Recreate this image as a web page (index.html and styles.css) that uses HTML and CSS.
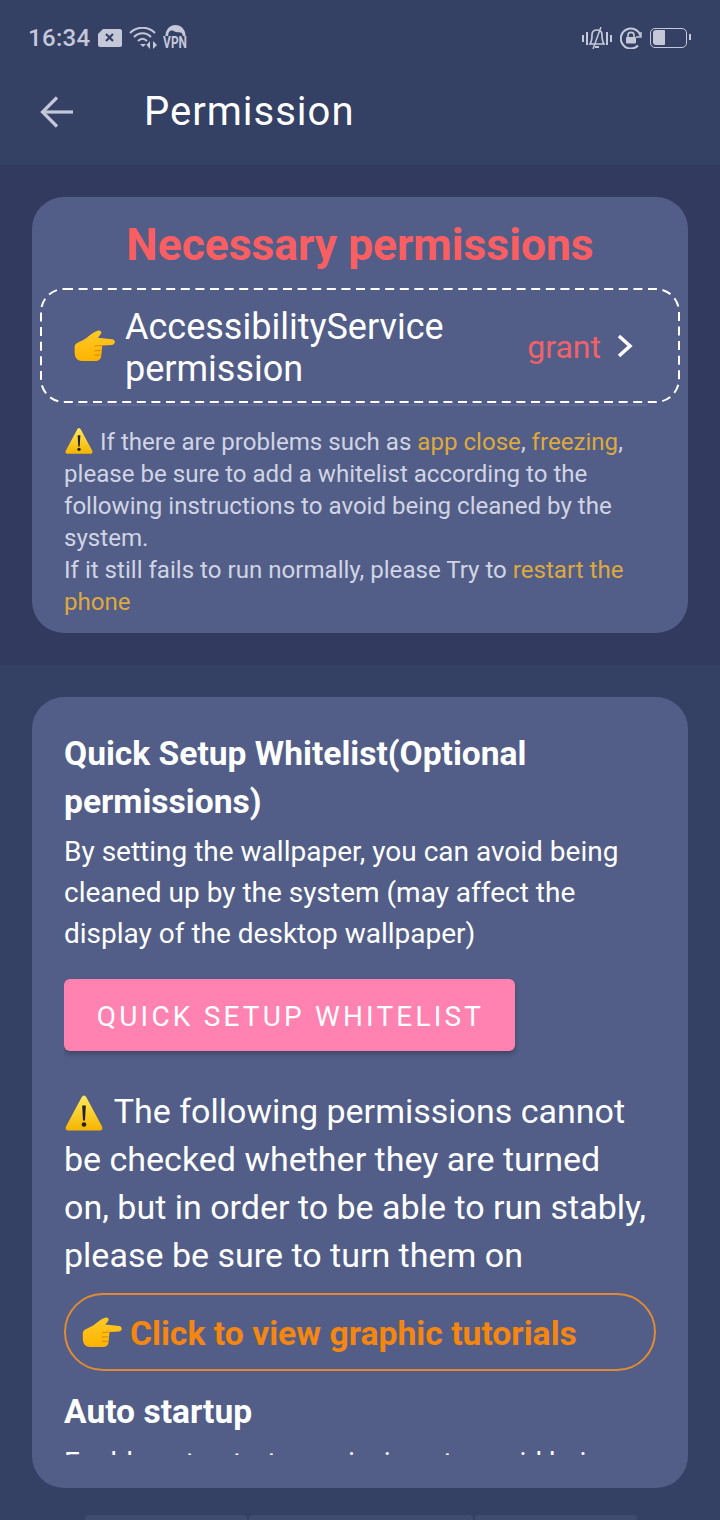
FILE: index.html
```html
<!DOCTYPE html>
<html lang="en">
<head>
    <meta charset="UTF-8">
    <meta name="viewport" content="width=device-width, initial-scale=1.0">
    <title>Permission</title>
    <link rel="stylesheet" href="styles.css">
</head>
<body>

<svg class="sprite" width="0" height="0">
    <defs>
        <linearGradient id="handfill" x1="0" y1="0" x2="0" y2="1">
            <stop offset="0" stop-color="#ffca28"/>
            <stop offset="1" stop-color="#ffb300"/>
        </linearGradient>
        <symbol id="point" viewBox="0 0 42 32">
            <path d="M13 8 C17 5 20 2 25 0.500 C28 0 29 3 27 5 L24.500 8 L39 9.500 C43 10 43 15 39 15.500 L29 16 L28 26 C28 30 25 32 22 32 L8 32 C3 32 0.500 28 0.500 23 L0.500 17 C0.500 13 8 12 13 8 Z" fill="url(#handfill)"/>
            <path d="M29 16 L21 16.500 M28 21 L21 21.500 M27.500 26 L21 26" stroke="#e08e00" stroke-width="1.200" fill="none"/>
        </symbol>
        <linearGradient id="warnfill" x1="0" y1="0" x2="0" y2="1">
            <stop offset="0" stop-color="#ffe95c"/>
            <stop offset="1" stop-color="#f5b400"/>
        </linearGradient>
        <symbol id="warn" viewBox="0 0 38 36">
            <path d="M19 1 C20 1 21 2 21.500 3 L37 32 C38 34 37 36 35 36 L3 36 C1 36 0 34 1 32 L16.500 3 C17 2 18 1 19 1 Z" fill="url(#warnfill)"/>
            <path d="M17.200 11 L20.800 11 L20 26 L18 26 Z" fill="#222"/>
            <circle cx="19" cy="30" r="2.300" fill="#222"/>
        </symbol>
    </defs>
</svg>

<header class="top">
    <div class="status-bar">
        <div class="status-left">
            <span class="clock">16:34</span>
            <svg class="ic-notif" width="24" height="18" viewBox="0 0 24 18">
                <path d="M5 0 H22 C23 0 24 1 24 2 V16 C24 17 23 18 22 18 H2 C1 18 0 17 0 16 V5 Z" fill="#c5c8d8"/>
                <path d="M8 5 L15 12 M15 5 L8 12" stroke="#354065" stroke-width="2.200"/>
            </svg>
            <svg class="ic-wifi" width="28" height="22" viewBox="0 0 28 22" fill="none" stroke="#c5c8d8" stroke-width="2">
                <path d="M1 6 C8 -1 19 -1 26 6"/>
                <path d="M5 10 C10 5 17 5 22 10"/>
                <path d="M9 14 C12 11 15 11 18 14"/>
                <path d="M11 17 L14 20 L17 17 Z" fill="#c5c8d8" stroke="none"/>
                <path d="M21 14 V22 L17.500 18 Z M24 14 V22 L28 18 Z" fill="#c5c8d8" stroke="none"/>
            </svg>
            <div class="ic-vpn">
                <svg width="23" height="11" viewBox="0 0 24 12">
                    <path d="M1 12 C1 5 6 0 12 0 C18 0 23 5 23 12 L20 12 C20 9 18 8 16 8 L14 8 C12 8 10 6 8 6 C5 6 4 9 4 12 Z" fill="#c5c8d8"/>
                </svg>
                <span>VPN</span>
            </div>
        </div>
        <div class="status-right">
            <svg width="30" height="22" viewBox="0 0 30 22" fill="none" stroke="#c5c8d8" stroke-width="2">
                <path d="M1 8 V15 M5 5 V18 M25 5 V18 M29 8 V15"/>
                <path d="M8 17 C10 14 10 10 10 8 C10 4 12 3 15 3 C18 3 20 4 20 8 C20 10 20 14 22 17 Z" stroke-width="1.700"/>
                <path d="M13 20 H17"/>
                <path d="M19 0 L11 22" stroke-width="1.500"/>
            </svg>
            <svg width="22" height="22" viewBox="0 0 22 22" fill="none" stroke="#c5c8d8" stroke-width="2">
                <path d="M20.500 9 A10 10 0 1 0 18 18.500"/>
                <path d="M21 5 V10 H16" stroke-width="1.400"/>
                <path d="M8 10 V8 C8 4.500 14 4.500 14 8 V10" stroke-width="1.600"/>
                <rect x="6" y="10" width="10" height="6.500" rx="1" fill="#c5c8d8" stroke="none"/>
            </svg>
            <div class="battery">
                <div class="battery-level"></div>
            </div>
        </div>
    </div>
    <div class="toolbar">
        <svg class="back" width="34" height="32" viewBox="0 0 34 32" fill="none" stroke="#c5c8d8" stroke-width="3.200">
            <path d="M33 16 H3"/>
            <path d="M17 1.500 L2.500 16 L17 30.500"/>
        </svg>
        <h1>Permission</h1>
    </div>
</header>

<section class="band band-first">
    <div class="card card-necessary">
        <h2 class="necessary-title">Necessary permissions</h2>
        <div class="grant-row">
            <svg class="dash-frame" width="640" height="115">
                <rect x="1" y="1" width="638" height="113" rx="23" fill="none" stroke="#fff" stroke-width="2" stroke-dasharray="9 5.600"/>
            </svg>
            <svg class="emoji-point" width="41" height="31"><use href="#point"/></svg>
            <span class="grant-name">AccessibilityService permission</span>
            <span class="grant-link">grant</span>
            <svg class="chevron" width="16" height="24" viewBox="0 0 16 24" fill="none" stroke="#fff" stroke-width="3.500">
                <path d="M2 2 L13 12 L2 22"/>
            </svg>
        </div>
        <div class="row-line"></div>
        <p class="note">
            <svg class="emoji-warn-small" width="28" height="27"><use href="#warn"/></svg>
            If there are problems such as <span class="hl">app close</span>, <span class="hl">freezing</span>, please be sure to add a whitelist according to the following instructions to avoid being cleaned by the system.<br>
            If it still fails to run normally, please Try to <span class="hl">restart the phone</span>
        </p>
    </div>
</section>

<section class="band">
    <div class="card card-optional">
        <div class="scroll-area">
            <h3 class="opt-title">Quick Setup Whitelist(Optional permissions)</h3>
            <p class="opt-text">By setting the wallpaper, you can avoid being cleaned up by the system (may affect the display of the desktop wallpaper)</p>
            <button class="quick-btn">Quick Setup Whitelist</button>
            <p class="warning-text">
                <svg class="emoji-warn" width="38" height="37"><use href="#warn"/></svg>
                The following permissions cannot be checked whether they are turned on, but in order to be able to run stably, please be sure to turn them on
            </p>
            <a class="tutorial-link">
                <svg class="emoji-point-tut" width="40" height="30"><use href="#point"/></svg>
                <span>Click to view graphic tutorials</span>
            </a>
            <h3 class="auto-title">Auto startup</h3>
            <p class="opt-text auto-text">Enable auto-start permissions to avoid being cleaned up by the system</p>
        </div>
    </div>
</section>

<div class="bottom-tabs">
    <div class="tab tab-a"></div>
    <div class="tab tab-b"></div>
    <div class="tab tab-c"></div>
</div>

</body>
</html>
```

FILE: styles.css
```css
* {
    box-sizing: border-box;
}
html, body {
    height: 1520px;
}
body {
    font-family: Roboto, sans-serif;
    margin: 0;
    padding: 0;
    background-color: #354065;
    color: #fff;
    overflow: hidden;
}
.sprite {
    display: block;
    height: 0;
}
.top {
    height: 165px;
    background-color: #354065;
}
.status-bar {
    height: 64px;
    padding: 0 33px 0 28px;
    display: flex;
    justify-content: space-between;
    align-items: center;
    color: #c5c8d8;
}
.status-left {
    display: flex;
    align-items: center;
    padding-top: 11px;
}
.clock {
    font-size: 24px;
    font-weight: 500;
    letter-spacing: 0.3px;
}
.ic-notif {
    margin-left: 8px;
}
.ic-wifi {
    margin-left: 7px;
}
.ic-vpn {
    margin-left: 6px;
    width: 24px;
    display: flex;
    flex-direction: column;
    align-items: center;
    margin-top: -2px;
}
.ic-vpn span {
    font-size: 17px;
    line-height: 13px;
    font-weight: 700;
    transform: scaleX(0.7);
}
.status-right {
    display: flex;
    align-items: center;
    gap: 8px;
    padding-top: 11px;
}
.battery {
    position: relative;
    width: 37px;
    height: 20px;
    border: 1.5px solid #c5c8d8;
    border-radius: 5px;
    padding: 1.5px;
}
.battery::after {
    content: "";
    position: absolute;
    right: -5px;
    top: 5px;
    width: 2px;
    height: 6px;
    background-color: #c5c8d8;
}
.battery-level {
    width: 12px;
    height: 100%;
    background-color: #c5c8d8;
    border-radius: 3px 1px 1px 3px;
}
.toolbar {
    height: 101px;
    padding-left: 40px;
    display: flex;
    align-items: center;
    padding-bottom: 6px;
}
.back {
    flex: none;
}
.toolbar h1 {
    margin: 0 0 0 70px;
    font-size: 40px;
    font-weight: 400;
    letter-spacing: 1px;
}
.band {
    padding: 32px;
}
.band-first {
    height: 500px;
    background-color: #323a5f;
}
.card {
    background-color: #525e87;
    border-radius: 32px;
}
.card-necessary {
    height: 436px;
    padding: 22px 8px 0;
}
.necessary-title {
    margin: 0;
    font-size: 44.400px;
    line-height: 52px;
    font-weight: 700;
    text-align: center;
    color: #f95f62;
}
.grant-row {
    position: relative;
    margin-top: 17px;
    height: 115px;
    padding: 0 47px 0 34px;
    display: flex;
    align-items: center;
}
.dash-frame {
    position: absolute;
    left: 0;
    top: 0;
}
.emoji-point {
    flex: none;
}
.grant-name {
    margin-left: 10px;
    padding-top: 5px;
    width: 350px;
    font-size: 36px;
    line-height: 42px;
    color: #fff;
}
.grant-link {
    margin-left: auto;
    padding-top: 2px;
    font-size: 32px;
    color: #f0626a;
}
.chevron {
    margin-left: 16px;
    flex: none;
}
.row-line {
    height: 2px;
    margin: 1px 33px 0 36px;
    background-color: #5d6a96;
}
.note {
    margin: 20px 24px 0;
    font-size: 24.100px;
    line-height: 32px;
    color: #d0d4e4;
}
.emoji-warn-small {
    vertical-align: -4px;
    margin: 0 1px;
}
.hl {
    color: #dda93f;
}
.card-optional {
    height: 791px;
    padding: 33px 32px 0;
}
.scroll-area {
    height: 725px;
    overflow: hidden;
}
.opt-title {
    margin: 0;
    font-size: 33.600px;
    line-height: 48px;
    font-weight: 700;
}
.opt-text {
    margin: 5px 0 0;
    font-size: 28px;
    line-height: 41px;
    color: #fff;
}
.quick-btn {
    display: block;
    margin-top: 25px;
    padding: 2px 0 0 2px;
    width: 451px;
    height: 72px;
    border: none;
    border-radius: 6px;
    background-color: #ff82b0;
    color: #fff;
    font-family: Roboto, sans-serif;
    font-size: 28px;
    letter-spacing: 3.170px;
    text-transform: uppercase;
    box-shadow: 0 3px 5px rgba(0, 0, 0, 0.25);
}
.warning-text {
    margin: 36px 0 0;
    padding-right: 8px;
    font-size: 34px;
    line-height: 48px;
}
.emoji-warn {
    vertical-align: -8px;
    margin: 0 3px 0 1px;
}
.tutorial-link {
    margin-top: 14px;
    height: 78px;
    width: 592px;
    border: 2px solid #e08a35;
    border-radius: 39px;
    padding: 0 0 0 16px;
    display: flex;
    align-items: center;
    gap: 8px;
    font-size: 33.700px;
    font-weight: 700;
    color: #f5860f;
}
.tutorial-link span {
    padding-top: 2px;
}
.auto-title {
    margin: 17px 0 0;
    font-size: 33.600px;
    line-height: 48px;
    font-weight: 700;
}
.auto-text {
    margin-top: 6px;
}
.bottom-tabs {
    display: flex;
    gap: 2px;
    margin: -5px 0 0 85px;
    width: 552px;
}
.tab {
    height: 8px;
    background-color: #414b70;
    border-radius: 4px 4px 0 0;
}
.tab-a {
    width: 162px;
}
.tab-b {
    width: 224px;
}
.tab-c {
    width: 162px;
}
```
